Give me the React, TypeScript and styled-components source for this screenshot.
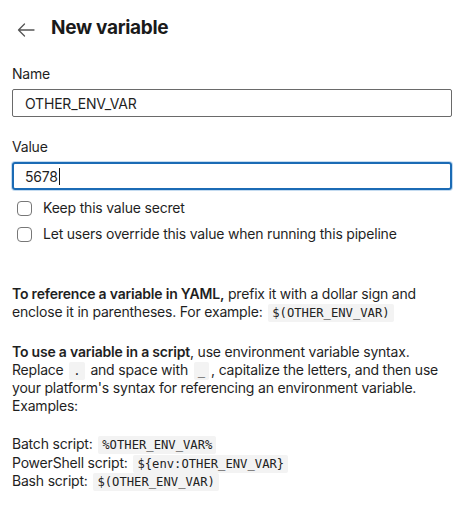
import React from "react";
import styled, { createGlobalStyle } from "styled-components";

const Global = createGlobalStyle`
  html, body { margin: 0; padding: 0; background: #fff; }
  body {
    font-family: Inter, "Liberation Sans", Arial, sans-serif;
    color: #1f1f1f;
    -webkit-font-smoothing: antialiased;
  }
`;

const Page = styled.div`
  width: 466px;
  height: 518px;
  box-sizing: border-box;
  padding: 0 14px 0 12px;
  display: flex;
  flex-direction: column;
  letter-spacing: -0.2px;
`;

const Header = styled.div`
  display: flex;
  align-items: center;
  height: 54px;
  gap: 15px;
  padding-left: 4px;
`;

const BackButton = styled.button`
  border: none;
  background: none;
  padding: 0;
  width: 20px;
  height: 20px;
  display: flex;
  align-items: center;
  justify-content: center;
  color: #555;
  margin-top: 5px;
`;

const Title = styled.h1`
  margin: 0;
  font-size: 19px;
  font-weight: 700;
  color: #1a1a1a;
  letter-spacing: -0.3px;
`;

const Field = styled.div<{ $top: number }>`
  display: flex;
  flex-direction: column;
  margin-top: ${(p) => p.$top}px;
`;

const Label = styled.label`
  font-size: 14px;
  line-height: 18px;
  margin-bottom: 6px;
  color: #1f1f1f;
`;

const Input = styled.div<{ $focused?: boolean }>`
  box-sizing: border-box;
  height: 28px;
  border: ${(p) => (p.$focused ? "2px solid #1b6bb5" : "1px solid #6a6a6a")};
  border-radius: ${(p) => (p.$focused ? 3 : 2)}px;
  box-shadow: ${(p) => (p.$focused ? "0 0 0 1px #c4dbf0" : "none")};
  padding: 0 ${(p) => (p.$focused ? 11 : 12)}px;
  display: flex;
  align-items: center;
  font-size: 14px;
  color: #1f1f1f;
`;

const Caret = styled.span`
  display: inline-block;
  width: 1px;
  height: 17px;
  background: #111;
  margin-left: 1px;
`;

const Checks = styled.div`
  display: flex;
  flex-direction: column;
  gap: 10px;
  margin-top: 10px;
  padding-left: 5px;
`;

const CheckRow = styled.label`
  display: flex;
  align-items: center;
  gap: 11px;
  font-size: 14px;
  line-height: 16px;
`;

const Box = styled.span`
  box-sizing: border-box;
  width: 15px;
  height: 15px;
  border: 1px solid #777;
  border-radius: 4px;
  background: #fff;
`;

const Help = styled.p<{ $top: number }>`
  margin: 0;
  margin-top: ${(p) => p.$top}px;
  font-size: 14px;
  line-height: 18px;
  color: #1f1f1f;
  b { font-weight: 600; }
`;

const Code = styled.code`
  font-family: "DejaVu Sans Mono", "Liberation Mono", monospace;
  font-size: 12.2px;
  line-height: 14px;
  letter-spacing: 0;
  background: #f3f3f3;
  border-radius: 2px;
  padding: 2px 4px;
  margin: 0 2px;
  color: #222;
`;

const Examples = styled.div`
  margin-top: 20px;
  display: flex;
  flex-direction: column;
  font-size: 14px;
`;

const ExampleRow = styled.div`
  height: 18.5px;
  line-height: 18.5px;
`;

const Arrow = () => (
  <svg width="18" height="14" viewBox="0 0 18 14" fill="none">
    <path d="M17 7H1.5M7.5 1L1.5 7l6 6" stroke="currentColor" strokeWidth="1.3" strokeLinecap="round" strokeLinejoin="round" />
  </svg>
);

export default function App() {
  return (
    <>
      <Global />
      <Page>
        <Header>
          <BackButton aria-label="Back">
            <Arrow />
          </BackButton>
          <Title>New variable</Title>
        </Header>
        <Field $top={11}>
          <Label>Name</Label>
          <Input>OTHER_ENV_VAR</Input>
        </Field>
        <Field $top={21}>
          <Label>Value</Label>
          <Input $focused>
            5678
            <Caret />
          </Input>
        </Field>
        <Checks>
          <CheckRow>
            <Box />
            Keep this value secret
          </CheckRow>
          <CheckRow>
            <Box />
            Let users override this value when running this pipeline
          </CheckRow>
        </Checks>
        <Help $top={43}>
          <b>To reference a variable in YAML,</b> prefix it with a dollar sign and enclose it in parentheses. For example:{" "}
          <Code>$(OTHER_ENV_VAR)</Code>
        </Help>
        <Help $top={22}>
          <b>To use a variable in a script</b>, use environment variable syntax. Replace <Code>.</Code> and space with{" "}
          <Code>_</Code>, capitalize the letters, and then use your platform's syntax for referencing an environment
          variable. Examples:
        </Help>
        <Examples>
          <ExampleRow>
            Batch script: <Code>%OTHER_ENV_VAR%</Code>
          </ExampleRow>
          <ExampleRow>
            PowerShell script: <Code>{"${env:OTHER_ENV_VAR}"}</Code>
          </ExampleRow>
          <ExampleRow>
            Bash script: <Code>$(OTHER_ENV_VAR)</Code>
          </ExampleRow>
        </Examples>
      </Page>
    </>
  );
}
